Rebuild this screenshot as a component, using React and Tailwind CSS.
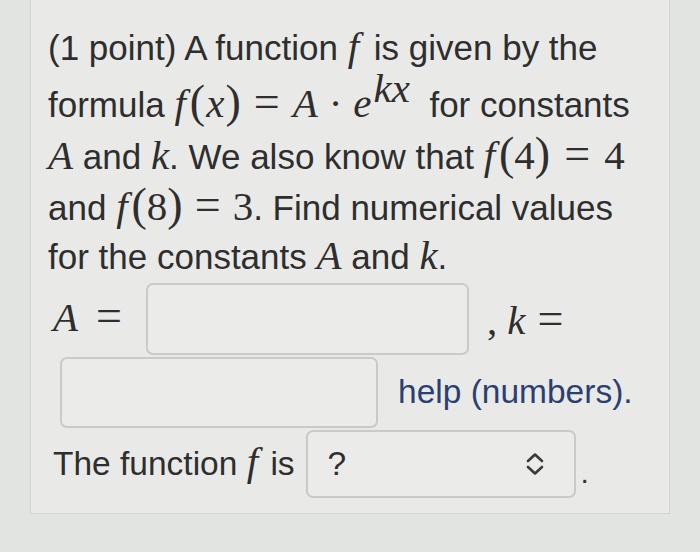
import React from "react";

const sans = { fontFamily: '"Liberation Sans", Arial, sans-serif' };
const serif = { fontFamily: '"Liberation Serif", "Times New Roman", serif' };

function I({ children, className = "" }) {
  return (
    <span className={"italic text-[41px] leading-[0] " + className} style={serif}>
      {children}
    </span>
  );
}
function U({ children, className = "" }) {
  return (
    <span className={"text-[41px] leading-[0] " + className} style={serif}>
      {children}
    </span>
  );
}
function P({ children }) {
  return (
    <span className="text-[46px] leading-[0]" style={serif}>
      {children}
    </span>
  );
}
function Eq({ className = "mx-[12px]" }) {
  return (
    <span className={"text-[46px] leading-[0] " + className} style={serif}>
      =
    </span>
  );
}

function Chevrons() {
  return (
    <svg width="22" height="26" viewBox="0 0 22 26" fill="none" stroke="#3a3a3a" strokeWidth="2.6" strokeLinecap="round" strokeLinejoin="round">
      <path d="M4 10 L11 3.5 L18 10" />
      <path d="M4 16 L11 22.5 L18 16" />
    </svg>
  );
}

export default function App() {
  return (
    <div className="w-[700px] h-[552px] overflow-hidden bg-[#e2e4e1] text-[#2e2e2e]" style={sans}>
      <div className="ml-[30px] w-[640px] h-[514px] bg-[#e9eae8] border-l border-r border-b border-[#d3d5d2] pl-[17px] pt-[22px] text-[35px]">
        <div className="h-[57px] leading-[52px] whitespace-pre">
          <span>(1 point) A function </span>
          <I className="mr-[5px]">f</I>
          <span> is given by the</span>
        </div>
        <div className="h-[52px] leading-[52px] whitespace-pre">
          <span>formula </span>
          <I className="mr-[4px]">f</I>
          <P>(</P>
          <I className="mx-[1px]">x</I>
          <P>)</P>
          <Eq className="mx-[13px]" />
          <I>A</I>
          <U className="mx-[11px]">·</U>
          <I>e</I>
          <I className="text-[28px] align-[15px] ml-[2px]">kx</I>
          <span>  for constants</span>
        </div>
        <div className="h-[51px] leading-[52px] whitespace-pre">
          <I>A</I>
          <span> and </span>
          <I>k</I>
          <span>. We also know that </span>
          <I className="mr-[4px]">f</I>
          <P>(</P>
          <U>4</U>
          <P>)</P>
          <Eq className="mx-[14px]" />
          <U>4</U>
        </div>
        <div className="h-[49px] leading-[52px] whitespace-pre">
          <span>and </span>
          <I className="mr-[4px]">f</I>
          <P>(</P>
          <U>8</U>
          <P>)</P>
          <Eq />
          <U>3</U>
          <span>. Find numerical values</span>
        </div>
        <div className="h-[52px] leading-[52px] whitespace-pre">
          <span>for the constants </span>
          <I>A</I>
          <span> and </span>
          <I>k</I>
          <span>.</span>
        </div>

        <div className="h-[72px] flex items-center pl-[5px]">
          <span className="whitespace-pre w-[93px] leading-[52px]">
            <I>A</I>
            <Eq className="ml-[18px]" />
          </span>
          <div className="w-[323px] h-[72px] rounded-[7px] border-2 border-[#c9cbc8] bg-[#ebecea]" />
          <span className="whitespace-pre ml-[18px] mt-[6px] leading-[52px]">
            <U>,</U>
            <I className="ml-[10px]">k</I>
            <Eq />
          </span>
        </div>

        <div className="mt-[2px] h-[71px] flex items-center pl-[12px]">
          <div className="w-[318px] h-[71px] rounded-[7px] border-2 border-[#c9cbc8] bg-[#ebecea]" />
          <span className="ml-[20px] text-[#2c3f73] text-[33.5px] whitespace-pre">help (numbers).</span>
        </div>

        <div className="mt-[2px] h-[68px] flex items-center pl-[5px] text-[33.5px]">
          <span className="whitespace-pre leading-[52px]">
            The function <I className="mr-[3px]">f</I> is
          </span>
          <div className="ml-[11px] w-[270px] h-[68px] rounded-[7px] border-2 border-[#c9cbc8] bg-[#ebecea] flex items-center justify-between pl-[20px] pr-[28px]">
            <span>?</span>
            <Chevrons />
          </div>
          <span className="ml-[5px] mt-[16px] text-[30px] text-[#333]">.</span>
        </div>
      </div>
    </div>
  );
}
